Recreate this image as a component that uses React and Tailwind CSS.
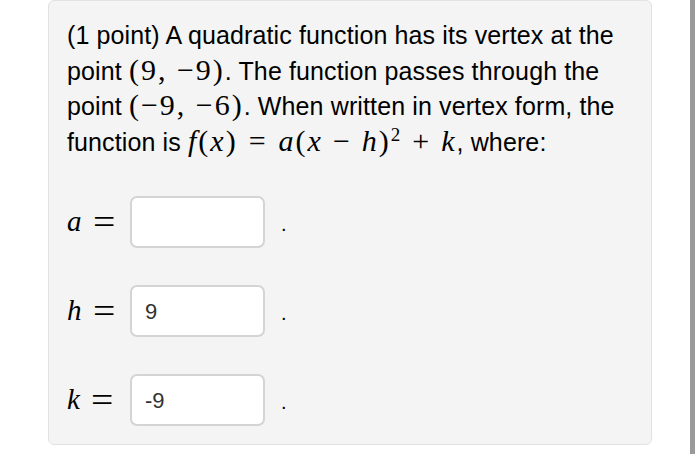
import React from "react";

const serif = { fontFamily: '"Liberation Serif", "DejaVu Serif", serif' };

const M = ({ children }) => (
  <span className="text-[30px] leading-[20px] whitespace-nowrap tracking-[2px]" style={serif}>
    {children}
  </span>
);

const Op = ({ children, wide }) => (
  <span className={wide ? "mx-[11px]" : "mx-[10px]"}>{children}</span>
);

const AnswerRow = ({ name, value }) => (
  <div className="flex items-center h-[52px]">
    <div className="w-[63px] flex items-center text-[29px]" style={serif}>
      <span className="italic">{name}</span>
      <span className="ml-[12px] text-[36px] leading-none inline-block scale-x-[1.1]">=</span>
    </div>
    <div className="w-[135px] h-[52px] bg-white border-2 border-[#d4d4d4] rounded-[7px] flex items-center px-[13px] text-[22px] text-[#333]">
      {value}
    </div>
    <span className="ml-[16px] text-[20px] mt-[4px]">.</span>
  </div>
);

export default function App() {
  return (
    <div
      className="w-[700px] h-[454px] bg-white flex overflow-hidden"
      style={{ fontFamily: '"Liberation Sans", Arial, sans-serif' }}
    >
      <div className="ml-[48px] w-[604px] h-[445px] bg-[#f4f4f4] border border-[#e2e2e2] rounded-[6px] pt-[17px] px-[18px] text-black">
        <p className="text-[25px] leading-[35.5px] tracking-[0.12px]">
          (1 point) A quadratic function has its vertex at the point{" "}
          <M>(9, −9)</M>. The function passes through the point{" "}
          <M>(−9, −6)</M>. When written in vertex form, the function is{" "}
          <M>
            <i>f</i>(<i>x</i>)<Op wide>=</Op><i>a</i>(<i>x</i>
            <Op>−</Op>
            <i>h</i>)<sup className="text-[19px] leading-none">2</sup>
            <Op>+</Op>
            <i>k</i>
          </M>
          , where:
        </p>
        <div className="mt-[36px] flex flex-col gap-[37px]">
          <AnswerRow name="a" value="" />
          <AnswerRow name="h" value="9" />
          <AnswerRow name="k" value="-9" />
        </div>
      </div>
      <div className="ml-[38px] w-[5px] h-[454px] bg-[#9a9a9a]" />
    </div>
  );
}
